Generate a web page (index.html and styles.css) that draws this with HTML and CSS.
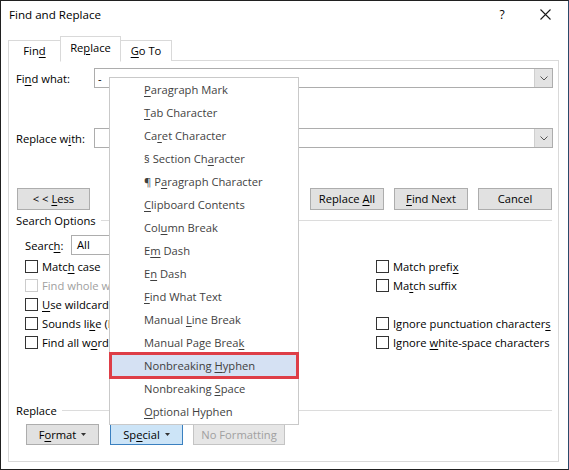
FILE: index.html
```html
<!DOCTYPE html>
<html>
<head>
<meta charset="utf-8">
<title>Find and Replace</title>
<link rel="stylesheet" href="styles.css">
</head>
<body>
<div class="win">
  <div class="titlebar">
    <div class="title">Find and Replace</div>
    <div class="help">?</div>
    <div class="close"><svg width="11" height="11" viewBox="0 0 11 11"><path d="M0.5 0.5L10.5 10.5M10.5 0.5L0.5 10.5" stroke="#1a1a1a" stroke-width="1.1" fill="none"/></svg></div>
  </div>
  <div class="tabs">
    <div class="tab">Fin<u>d</u></div>
    <div class="tab active">Re<u>p</u>lace</div>
    <div class="tab"><u>G</u>o To</div>
  </div>
  <div class="panel">
    <div class="field-row first">
      <div class="label">Fi<u>n</u>d what:</div>
      <div class="combo"><span class="value">-</span><span class="drop"><svg width="8" height="5" viewBox="0 0 8 5"><path d="M0.5 0.5L4 4L7.5 0.5" stroke="#555" fill="none"/></svg></span></div>
    </div>
    <div class="field-row second">
      <div class="label">Replace w<u>i</u>th:</div>
      <div class="combo"><span class="value"></span><span class="drop"><svg width="8" height="5" viewBox="0 0 8 5"><path d="M0.5 0.5L4 4L7.5 0.5" stroke="#555" fill="none"/></svg></span></div>
    </div>
    <div class="button-row">
      <div class="btn less"><span>&lt; &lt; <u>L</u>ess</span></div>
      <div class="spacer"></div>
      <div class="btn"><span>Replace <u>A</u>ll</span></div>
      <div class="btn"><span><u>F</u>ind Next</span></div>
      <div class="btn"><span>Cancel</span></div>
    </div>
    <div class="group search-group"><span>Search Options</span></div>
    <div class="search-row">
      <div class="search-label">Searc<u>h</u>:</div>
      <div class="select">All</div>
    </div>
    <div class="options">
      <div class="opt"><span class="box"></span><span>Matc<u>h</u> case</span></div>
      <div class="opt"><span class="box"></span><span>Match prefi<u>x</u></span></div>
      <div class="opt disabled"><span class="box"></span><span>Find whole words onl<u>y</u></span></div>
      <div class="opt"><span class="box"></span><span>Ma<u>t</u>ch suffix</span></div>
      <div class="opt"><span class="box"></span><span><u>U</u>se wildcards</span></div>
      <div class="opt empty"></div>
      <div class="opt"><span class="box"></span><span>Sounds li<u>k</u>e (English)</span></div>
      <div class="opt"><span class="box"></span><span>Ignore punctuation character<u>s</u></span></div>
      <div class="opt"><span class="box"></span><span>Find all w<u>o</u>rd forms (English)</span></div>
      <div class="opt"><span class="box"></span><span>Ignore <u>w</u>hite-space characters</span></div>
    </div>
    <div class="group replace-group"><span>Replace</span></div>
    <div class="bottom-row">
      <div class="btn small format"><span>F<u>o</u>rmat</span><svg class="caret" width="5" height="3" viewBox="0 0 5 3"><path d="M0 0H5L2.5 3Z" fill="#333"/></svg></div>
      <div class="btn small special"><span>Sp<u>e</u>cial</span><svg class="caret" width="5" height="3" viewBox="0 0 5 3"><path d="M0 0H5L2.5 3Z" fill="#333"/></svg></div>
      <div class="btn small disabled-btn"><span>No Formatting</span></div>
    </div>
  </div>
  <div class="menu">
    <div class="item"><u>P</u>aragraph Mark</div>
    <div class="item"><u>T</u>ab Character</div>
    <div class="item">Ca<u>r</u>et Character</div>
    <div class="item">§ Section Ch<u>a</u>racter</div>
    <div class="item">¶ P<u>a</u>ragraph Character</div>
    <div class="item"><u>C</u>lipboard Contents</div>
    <div class="item">Col<u>u</u>mn Break</div>
    <div class="item">E<u>m</u> Dash</div>
    <div class="item">E<u>n</u> Dash</div>
    <div class="item"><u>F</u>ind What Text</div>
    <div class="item">Manual <u>L</u>ine Break</div>
    <div class="item">Manual Page Brea<u>k</u></div>
    <div class="item selected">Nonbreaking <u>H</u>yphen</div>
    <div class="item">Nonbreaking <u>S</u>pace</div>
    <div class="item"><u>O</u>ptional Hyphen</div>
  </div>
</div>
</body>
</html>
```

FILE: styles.css
```css
* { box-sizing: border-box; }

body {
  margin: 0;
  background: #fff;
}

.win {
  position: relative;
  width: 569px;
  height: 470px;
  border: 1px solid #202020;
  border-right-color: #2a4a6a;
  background: #fff;
  font-family: "Open Sans", "Noto Sans", sans-serif;
  font-size: 11.2px;
  color: #000;
  overflow: hidden;
}

u { text-decoration: underline; text-underline-offset: 2px; text-decoration-thickness: 1px; }

.titlebar {
  height: 27px;
  display: flex;
  align-items: center;
  margin-bottom: 2px;
}

.title {
  flex: 1;
  padding-left: 8px;
  font-size: 11.6px;
}

.help {
  width: 30px;
  text-align: center;
  margin-right: 5px;
  font-size: 12px;
}

.close {
  width: 46px;
  display: flex;
  justify-content: center;
  align-items: center;
}

.tabs {
  height: 31px;
  display: flex;
  align-items: flex-end;
  padding-left: 7px;
  position: relative;
  z-index: 2;
}

.tab {
  height: 21px;
  line-height: 19px;
  text-align: center;
  border: 1px solid #d9d9d9;
  border-bottom: none;
  background: #fff;
  padding: 0;
  white-space: nowrap;
}

.tab:first-child { width: 53px; }
.tab.active {
  width: 61px;
  margin-left: -1px;
  background: #fff;
  border-bottom: 1px solid #fff;
  height: 26px;
  line-height: 21px;
  margin-bottom: -1px;
}
.tab:last-child { width: 52px; margin-left: -1px; }

.panel {
  margin-top: -1px;
  margin-left: 7px;
  width: 551px;
  height: 402px;
  border: 1px solid #d9d9d9;
  display: flex;
  flex-direction: column;
}

.field-row {
  height: 20px;
  display: flex;
  align-items: center;
}
.field-row.first { margin-top: 7px; }
.field-row.second { margin-top: 40px; }

.label {
  width: 85px;
  padding-left: 7px;
}

.combo {
  width: 459px;
  height: 20px;
  border: 1px solid #adadad;
  display: flex;
  align-items: center;
}

.combo .value {
  flex: 1;
  padding-left: 3px;
}

.combo .drop {
  width: 18px;
  height: 18px;
  background: #e3e3e3;
  border-left: 1px solid #cfcfcf;
  display: flex;
  align-items: center;
  justify-content: center;
}

.button-row {
  margin-top: 40px;
  height: 22px;
  display: flex;
  padding-right: 6px;
  gap: 10px;
}

.spacer { flex: 1; }

.btn {
  width: 74px;
  height: 22px;
  background: #e1e1e1;
  border: 1px solid #adadad;
  display: flex;
  align-items: center;
  justify-content: center;
  white-space: nowrap;
  padding-bottom: 1px;
}

.btn.less { margin-left: 8px; width: 73px; }

.group {
  display: flex;
  align-items: center;
  height: 16px;
  padding-left: 7px;
  padding-right: 6px;
}
.group::after {
  content: "";
  flex: 1;
  border-top: 1px solid #dcdcdc;
  margin-left: 5px;
}
.search-group { margin-top: 2px; }
.replace-group { margin-top: 50px; }

.search-row {
  margin-top: 7px;
  height: 20px;
  display: flex;
  align-items: center;
  padding-left: 16px;
}

.search-label { width: 46px; }

.select {
  width: 100px;
  height: 20px;
  border: 1px solid #adadad;
  padding-left: 5px;
  line-height: 18px;
}

.options {
  margin-top: 2px;
  padding-left: 16px;
  display: grid;
  grid-template-columns: 351px 1fr;
  grid-auto-rows: 19px;
}

.opt {
  display: flex;
  align-items: center;
  gap: 4px;
  white-space: nowrap;
}

.box {
  width: 13px;
  height: 13px;
  border: 1px solid #333;
  background: #fff;
  flex: none;
}

.opt.disabled { color: #a0a0a0; }
.opt.disabled .box { border-color: #cccccc; }

.bottom-row {
  margin-top: 6px;
  height: 21px;
  display: flex;
}

.btn.small {
  height: 21px;
  width: 73px;
  gap: 5px;
}
.btn.format { margin-left: 17px; }
.btn.special {
  margin-left: 11px;
  background: #cce4f7;
  border-color: #3a80c0;
}
.btn.disabled-btn {
  margin-left: 10px;
  width: 92px;
  color: #a0a0a0;
  background: #e6e6e6;
  border-color: #c4c4c4;
}

.caret { margin-top: 1px; }

.menu {
  position: absolute;
  left: 108px;
  top: 76px;
  width: 190px;
  height: 348px;
  background: #fff;
  border: 1px solid #c9c9c9;
  padding-top: 0;
  z-index: 5;
  color: #3f3f3f;
}

.item {
  position: relative;
  height: 23px;
  line-height: 23px;
  padding-left: 34px;
}

.item.selected {
  background: #d5e1f3;
}
.item.selected::after {
  content: "";
  position: absolute;
  left: -1px;
  right: -1px;
  top: -2px;
  bottom: -2px;
  border: 3px solid #de3e47;
}
```
